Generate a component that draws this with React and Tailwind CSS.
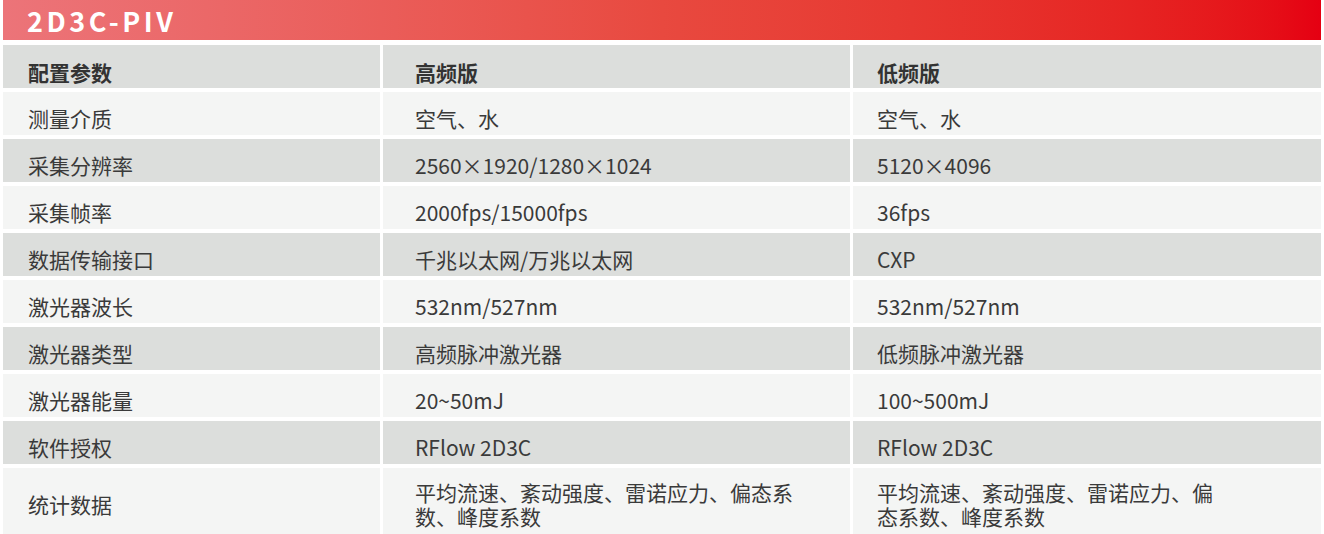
import React from 'react';

const rows = [
    ['测量介质', '空气、水', '空气、水'],
    ['采集分辨率', '2560×1920/1280×1024', '5120×4096'],
    ['采集帧率', '2000fps/15000fps', '36fps'],
    ['数据传输接口', '千兆以太网/万兆以太网', 'CXP'],
    ['激光器波长', '532nm/527nm', '532nm/527nm'],
    ['激光器类型', '高频脉冲激光器', '低频脉冲激光器'],
    ['激光器能量', '20~50mJ', '100~500mJ'],
    ['软件授权', 'RFlow 2D3C', 'RFlow 2D3C'],
];

const App = () => {
    return (
        <div className="w-[1324px] h-[534px] overflow-hidden bg-white px-[3px] font-['Noto_Sans_CJK_SC',sans-serif] text-[21px] leading-[24px] text-[#3a3a3a]">
            {/* Banner */}
            <div className="h-[40px] flex items-center pl-[24px] bg-gradient-to-r from-[#ec7479] via-[#e8493f] to-[#e50012]">
                <span className="text-[27px] font-bold tracking-[3.5px] text-white leading-none">2D3C-PIV</span>
            </div>

            {/* Table */}
            <div className="mt-[5px] grid grid-cols-[377px_467px_468px] gap-x-[3px] gap-y-[4px]">
                {/* Header */}
                <div className="h-[43px] bg-[#dcdedc] pt-[15px] pl-[25px] font-bold text-[#333]">配置参数</div>
                <div className="h-[43px] bg-[#dcdedc] pt-[15px] pl-[32px] font-bold text-[#333]">高频版</div>
                <div className="h-[43px] bg-[#dcdedc] pt-[15px] pl-[24px] font-bold text-[#333]">低频版</div>

                {rows.map((r, i) => {
                    const bg = i % 2 === 0 ? 'bg-[#f4f5f4]' : 'bg-[#dcdedc]';
                    return (
                        <React.Fragment key={r[0]}>
                            <div className={`h-[43px] ${bg} pt-[14px] pl-[25px]`}>{r[0]}</div>
                            <div className={`h-[43px] ${bg} pt-[14px] pl-[32px]`}>{r[1]}</div>
                            <div className={`h-[43px] ${bg} pt-[14px] pl-[24px]`}>{r[2]}</div>
                        </React.Fragment>
                    );
                })}

                {/* Last row, two lines */}
                <div className="h-[72px] bg-[#f4f5f4] pl-[25px] flex items-center">统计数据</div>
                <div className="h-[72px] bg-[#f4f5f4] pt-[12px] pl-[32px]">
                    <p className="w-[390px]">平均流速、紊动强度、雷诺应力、偏态系数、峰度系数</p>
                </div>
                <div className="h-[72px] bg-[#f4f5f4] pt-[12px] pl-[24px]">
                    <p className="w-[345px]">平均流速、紊动强度、雷诺应力、偏态系数、峰度系数</p>
                </div>
            </div>
        </div>
    );
};

export default App;
